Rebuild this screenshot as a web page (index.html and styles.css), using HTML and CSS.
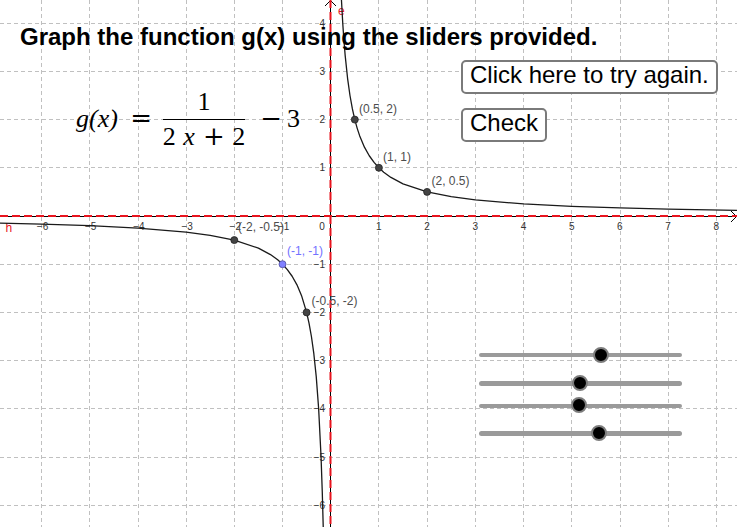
FILE: index.html
```html
<!DOCTYPE html>
<html lang="en">
<head>
<meta charset="utf-8">
<title>Graph g(x)</title>
<link rel="stylesheet" href="styles.css">
</head>
<body>
<div class="app">
  <svg class="graph" width="737" height="527" viewBox="0 0 737 527" xmlns="http://www.w3.org/2000/svg">
    <path class="grid" d="M41.5 0V527M89.5 0V527M138.5 0V527M186.5 0V527M234.5 0V527M282.5 0V527M378.5 0V527M427.5 0V527M475.5 0V527M523.5 0V527M571.5 0V527M620.5 0V527M668.5 0V527M716.5 0V527M0 23.5H737M0 71.5H737M0 119.5H737M0 167.5H737M0 264.5H737M0 312.5H737M0 360.5H737M0 408.5H737M0 457.5H737M0 505.5H737"/>
    <path class="axis" d="M0 216.5H737M330.5 0V527M731 211L736.5 216.5L731 222M325 6L330.5 0.5L336 6"/>
    <path class="asym" d="M0 216H737M330.5 0V527"/>
    <g class="ticks">
      <text x="42.5" y="230" text-anchor="middle">−6</text>
      <text x="90.7" y="230" text-anchor="middle">−5</text>
      <text x="138.9" y="230" text-anchor="middle">−4</text>
      <text x="187.1" y="230" text-anchor="middle">−3</text>
      <text x="235.3" y="230" text-anchor="middle">−2</text>
      <text x="283.5" y="230" text-anchor="middle">−1</text>
      <text x="322" y="230" text-anchor="middle">0</text>
      <text x="378.9" y="230" text-anchor="middle">1</text>
      <text x="427.1" y="230" text-anchor="middle">2</text>
      <text x="475.3" y="230" text-anchor="middle">3</text>
      <text x="523.5" y="230" text-anchor="middle">4</text>
      <text x="571.7" y="230" text-anchor="middle">5</text>
      <text x="619.9" y="230" text-anchor="middle">6</text>
      <text x="668.1" y="230" text-anchor="middle">7</text>
      <text x="716.3" y="230" text-anchor="middle">8</text>
      <text x="325" y="26.7" text-anchor="end">4</text>
      <text x="325" y="74.9" text-anchor="end">3</text>
      <text x="325" y="123.1" text-anchor="end">2</text>
      <text x="325" y="171.3" text-anchor="end">1</text>
      <text x="325" y="267.7" text-anchor="end">−1</text>
      <text x="325" y="315.9" text-anchor="end">−2</text>
      <text x="325" y="364.1" text-anchor="end">−3</text>
      <text x="325" y="412.3" text-anchor="end">−4</text>
      <text x="325" y="460.5" text-anchor="end">−5</text>
      <text x="325" y="508.7" text-anchor="end">−6</text>
    </g>
    <text class="asym-label" x="338" y="15">e</text>
    <text class="asym-label" x="5.5" y="231.5">h</text>
    <polyline class="curve" points="341.45,0 342.75,23.2 343.71,37.48 345.16,55.33 347.57,78.29 349.98,95.5 352.39,108.89 354.8,119.6 357.21,128.36 359.62,135.67 364.44,147.14 369.26,155.75 374.08,162.44 378.9,167.8 383.72,172.18 390.95,177.44 403,183.87 427.1,191.9 451.2,196.72 475.3,199.93 523.5,203.95 571.7,206.36 619.9,207.97 668.1,209.11 737,210.28"/>
    <polyline class="curve" points="0,223.03 41.5,224.03 89.7,225.64 137.9,228.05 186.1,232.07 210.2,235.28 234.3,240.1 258.4,248.13 270.45,254.56 277.68,259.82 282.5,264.2 287.32,269.56 292.14,276.25 296.96,284.86 301.78,296.33 306.6,312.4 309.01,323.11 311.42,336.5 313.83,353.71 316.24,376.67 318.65,408.8 321.06,457 322.26,491.43 323.23,527"/>
    <g class="points">
      <circle cx="354.8" cy="119.6" r="3.5"/>
      <circle cx="378.9" cy="167.8" r="3.5"/>
      <circle cx="427.1" cy="191.9" r="3.5"/>
      <circle cx="234.3" cy="240.1" r="3.5"/>
      <circle cx="306.6" cy="312.4" r="3.5"/>
    </g>
    <circle class="point-blue" cx="282.5" cy="264.2" r="3.5"/>
    <g class="labels">
      <text x="359" y="113">(0.5, 2)</text>
      <text x="383" y="160.7">(1, 1)</text>
      <text x="431.5" y="184.7">(2, 0.5)</text>
      <text x="238" y="231.3">(-2, -0.5)</text>
      <text x="311.5" y="304.7">(-0.5, -2)</text>
    </g>
    <text class="label-blue" x="287" y="255.3">(-1, -1)</text>
  </svg>

  <h1 class="title">Graph the function g(x) using the sliders provided.</h1>

  <div class="formula">
    <span class="var">g(x)</span>
    <span class="op op-eq">=</span>
    <span class="frac">
      <span class="num">1</span>
      <span class="den">2<span class="var dx">x</span><span class="op op-plus">+</span><span class="d2">2</span></span>
    </span>
    <span class="op op-minus">−</span>
    <span class="three">3</span>
  </div>

  <div class="buttons">
    <button class="btn" type="button">Click here to try again.</button>
    <button class="btn" type="button">Check</button>
  </div>

  <div class="sliders">
    <div class="slider"><div class="track"></div><span class="knob" style="left:122.7px"></span></div>
    <div class="slider slider-2"><div class="track"></div><span class="knob" style="left:101px"></span></div>
    <div class="slider slider-3"><div class="track"></div><span class="knob" style="left:100.3px"></span></div>
    <div class="slider slider-4"><div class="track"></div><span class="knob" style="left:120.3px"></span></div>
  </div>
</div>
</body>
</html>
```

FILE: styles.css
```css
html, body {
  margin: 0;
  padding: 0;
  background: #ffffff;
}

.app {
  position: relative;
  width: 737px;
  height: 527px;
  overflow: hidden;
  background: #ffffff;
  font-family: "Liberation Sans", Arial, sans-serif;
}

.graph {
  position: absolute;
  left: 0;
  top: 0;
  display: block;
}

.grid {
  fill: none;
  stroke: #c0c0c0;
  stroke-width: 1;
  stroke-dasharray: 4 3;
}

.axis {
  fill: none;
  stroke: #000000;
  stroke-width: 1;
}

.asym {
  fill: none;
  stroke: #e8141e;
  stroke-width: 2;
  stroke-dasharray: 8 4;
}

.ticks text {
  font-family: "Liberation Sans", Arial, sans-serif;
  font-size: 10px;
  fill: #333333;
}

.asym-label {
  font-family: "Liberation Sans", Arial, sans-serif;
  font-size: 12px;
  fill: #e8141e;
}

.curve {
  fill: none;
  stroke: #1a1a1a;
  stroke-width: 1.3;
  stroke-linejoin: round;
}

.points circle {
  fill: #444444;
  stroke: #222222;
  stroke-width: 0.8;
}

.point-blue {
  fill: #8080ff;
  stroke: #4a4a9a;
  stroke-width: 0.8;
}

.labels text {
  font-family: "Liberation Sans", Arial, sans-serif;
  font-size: 12px;
  fill: #4d4d4d;
}

.label-blue {
  font-family: "Liberation Sans", Arial, sans-serif;
  font-size: 12px;
  fill: #7272ff;
}

.title {
  position: absolute;
  left: 20px;
  top: 22.7px;
  margin: 0;
  font-family: "Liberation Sans", Arial, sans-serif;
  font-weight: bold;
  font-size: 24px;
  line-height: 28px;
  color: #000000;
  white-space: nowrap;
}

.formula {
  position: absolute;
  left: 76px;
  top: 87.7px;
  display: flex;
  align-items: center;
  font-family: "Liberation Serif", "Times New Roman", serif;
  font-size: 26px;
  line-height: 27px;
  color: #000000;
  white-space: nowrap;
}

.var {
  font-style: italic;
}

.op {
  font-family: "DejaVu Serif", "Liberation Serif", serif;
  font-weight: normal;
}

.op-eq {
  margin: 0 10px 0 12.5px;
}

.frac {
  display: flex;
  flex-direction: column;
  align-items: stretch;
  padding: 0 0.5px;
}

.num {
  padding-bottom: 4.5px;
  border-bottom: 1.3px solid #000000;
  text-align: center;
}

.den {
  padding-top: 2.9px;
  display: flex;
  align-items: baseline;
}

.dx {
  margin-left: 7.5px;
}

.op-plus {
  margin-left: 8.3px;
}

.d2 {
  margin-left: 7.4px;
}

.op-minus {
  margin-left: 14.5px;
}

.three {
  margin-left: 5px;
}

.buttons {
  position: absolute;
  left: 461px;
  top: 60px;
  display: flex;
  flex-direction: column;
  align-items: flex-start;
  gap: 13.7px;
}

.btn {
  margin: 0;
  padding: 0 7px 4px;
  font-family: "Liberation Sans", Arial, sans-serif;
  font-size: 24px;
  line-height: 26px;
  color: #000000;
  background: #ffffff;
  border: 2px solid #7a7a7a;
  border-radius: 5px;
}

.sliders {
  position: absolute;
  left: 479px;
  top: 346.5px;
  display: flex;
  flex-direction: column;
}

.slider {
  position: relative;
  width: 203px;
  height: 17px;
  display: flex;
  align-items: center;
}

.slider-2 {
  margin-top: 11.3px;
}

.slider-3 {
  margin-top: 5.7px;
}

.slider-4 {
  margin-top: 10.3px;
}

.track {
  width: 100%;
  height: 4.5px;
  border-radius: 3px;
  background: #9a9a9a;
}

.knob {
  position: absolute;
  top: 0;
  width: 12px;
  height: 12px;
  margin-left: -8.5px;
  border-radius: 50%;
  background: #000000;
  border: 2.5px solid #7d7d7d;
}
```
